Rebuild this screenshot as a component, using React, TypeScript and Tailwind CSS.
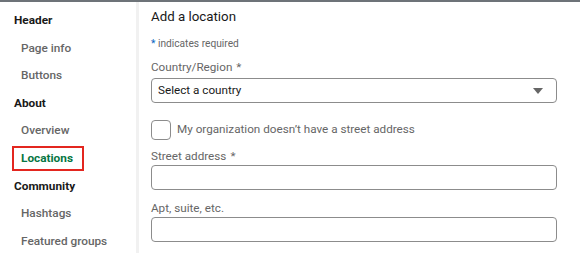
const sections = [
  { title: "Header", items: ["Page info", "Buttons"] },
  { title: "About", items: ["Overview", "Locations"] },
  { title: "Community", items: ["Hashtags", "Featured groups"] },
];

function Sidebar() {
  return (
    <nav className="w-[136px] shrink-0 pl-[14px] pt-[5px]">
      {sections.map((section) => (
        <div key={section.title}>
          <div className="h-[27.6px] text-[11.8px] font-bold leading-[27.6px] text-[#191919]">{section.title}</div>
          {section.items.map((item) =>
            item === "Locations" ? (
              <div key={item} className="flex h-[27.6px] items-center">
                <div className="-ml-[2px] inline-block border-2 border-[#e3261f] py-[2px] pl-[7px] pr-[9px] text-[11.8px] font-bold leading-[17px] text-[#057642]">
                  {item}
                </div>
              </div>
            ) : (
              <div key={item} className="h-[27.6px] pl-[7px] text-[11.8px] font-medium leading-[27.6px] text-[#666666]">
                {item}
              </div>
            ),
          )}
        </div>
      ))}
    </nav>
  );
}

function Field({ label, required, top }: { label: string; required?: boolean; top: string }) {
  return (
    <div className={top}>
      <div className="text-[11.7px] leading-[16px] text-[#666666]">
        {label}
        {required && <span className="ml-[4px]">*</span>}
      </div>
      <div className="mt-[1px] h-[25px] rounded-[4px] border border-[#8c8c8c]" />
    </div>
  );
}

export default function App() {
  return (
    <div
      className="flex h-[253px] w-[580px] overflow-hidden border-t-2 border-[#6d7378] bg-white"
      style={{ fontFamily: "Roboto, Arial, sans-serif" }}
    >
      <Sidebar />
      <div className="w-[3px] shrink-0 bg-[#f1f1f1]" />
      <main className="w-[418px] pl-[12px]">
        <h1 className="mt-[6px] text-[13.3px] leading-[18px] text-[#191919]">Add a location</h1>
        <div className="mt-[11px] text-[10.2px] leading-[14px] text-[#666666]">
          <span className="text-[#0a66c2]">*</span> indicates required
        </div>
        <div className="mt-[8px]">
          <div className="text-[11.7px] leading-[16px] text-[#666666]">
            Country/Region<span className="ml-[4px]">*</span>
          </div>
          <div className="mt-[3px] flex h-[25px] items-center justify-between rounded-[4px] border border-[#8c8c8c] pl-[6px] pr-[13px] text-[11.7px] text-[#191919]">
            <span>Select a country</span>
            <svg width="10" height="6" viewBox="0 0 10 6">
              <path d="M0 0h10L5 6z" fill="#666666" />
            </svg>
          </div>
        </div>
        <label className="mt-[17px] flex h-[20px] items-center gap-[6px]">
          <span className="h-[20px] w-[20px] rounded-[4px] border border-[#8c8c8c]" />
          <span className="text-[11.7px] text-[#666666]">My organization doesn’t have a street address</span>
        </label>
        <Field label="Street address" required top="mt-[8px]" />
        <Field label="Apt, suite, etc." top="mt-[10px]" />
      </main>
    </div>
  );
}
